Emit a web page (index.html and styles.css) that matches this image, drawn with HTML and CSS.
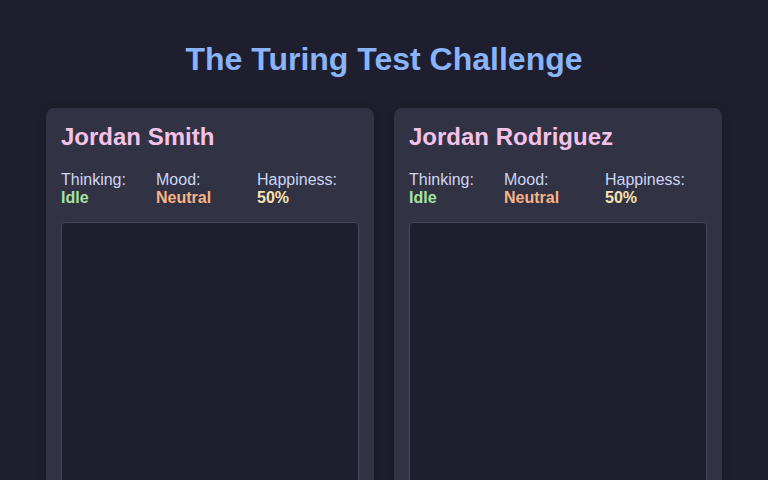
FILE: index.html
```html
<!DOCTYPE html>
<html lang="en">
<head>
<meta charset="utf-8">
<title>The Turing Test Challenge</title>
<link rel="stylesheet" href="styles.css">
</head>
<body>
<main class="page">
  <h1 class="title">The Turing Test Challenge</h1>
  <div class="agents">
    <section class="card">
      <h2 class="name">Jordan Smith</h2>
      <div class="stats">
        <div class="stat"><span class="label">Thinking:</span><span class="value idle">Idle</span></div>
        <div class="stat"><span class="label">Mood:</span><span class="value mood">Neutral</span></div>
        <div class="stat"><span class="label">Happiness:</span><span class="value happy">50%</span></div>
      </div>
      <div class="chat"></div>
    </section>
    <section class="card">
      <h2 class="name">Jordan Rodriguez</h2>
      <div class="stats">
        <div class="stat"><span class="label">Thinking:</span><span class="value idle">Idle</span></div>
        <div class="stat"><span class="label">Mood:</span><span class="value mood">Neutral</span></div>
        <div class="stat"><span class="label">Happiness:</span><span class="value happy">50%</span></div>
      </div>
      <div class="chat"></div>
    </section>
  </div>
</main>
</body>
</html>
```
FILE: styles.css
```css
html, body {
  margin: 0;
  padding: 0;
  background: #1e1e2e;
  height: 100%;
  overflow: hidden;
}
body {
  font-family: "Liberation Sans", Arial, sans-serif;
  color: #cdd6f4;
}
.page {
  padding: 41px 46px 0;
}
.title {
  margin: 0 0 30px;
  text-align: center;
  font-size: 32px;
  font-weight: bold;
  color: #89b4fa;
}
.agents {
  display: grid;
  grid-template-columns: 1fr 1fr;
  gap: 20px;
}
.card {
  background: #313244;
  border-radius: 8px;
  padding: 15px 15px 16px;
  height: 420px;
  box-shadow: 0 2px 8px rgba(0, 0, 0, 0.25);
}
.name {
  margin: 0 0 20px;
  font-size: 24px;
  font-weight: bold;
  color: #f5c2e7;
}
.stats {
  display: grid;
  grid-template-columns: 95px 101px auto;
  font-size: 16px;
}
.stat {
  display: flex;
  flex-direction: column;
}
.label {
  color: #cdd6f4;
}
.value {
  font-weight: bold;
}
.idle { color: #a6e3a1; }
.mood { color: #fab387; }
.happy { color: #f9e2af; }
.chat {
  margin-top: 15px;
  height: 400px;
  background: #1e1e2e;
  border: 1px solid #45475a;
  border-radius: 4px;
}
```
